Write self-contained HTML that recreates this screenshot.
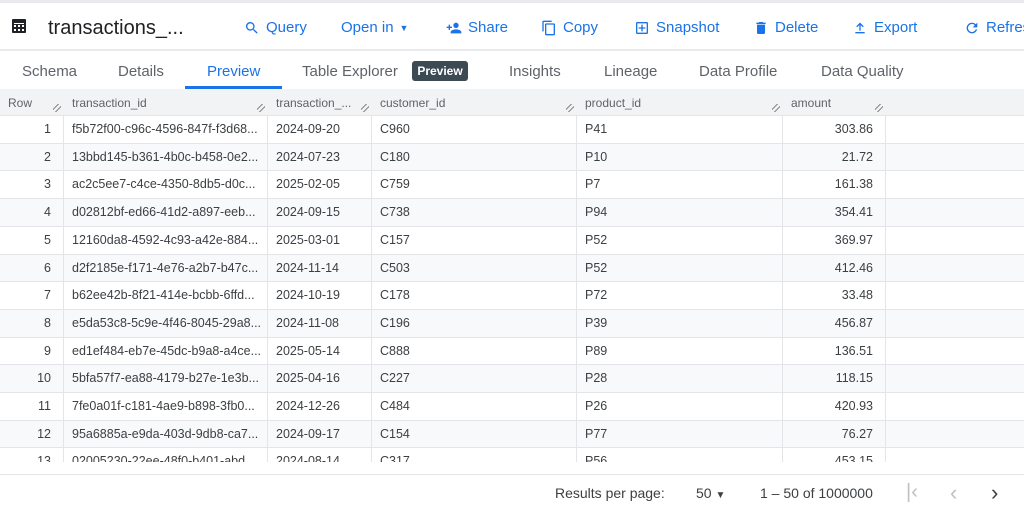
<!DOCTYPE html>
<html><head><meta charset="utf-8"><style>
*{box-sizing:border-box;margin:0;padding:0}
body{width:1024px;height:508px;overflow:hidden;background:#fff;font-family:"Liberation Sans",Arial,sans-serif;position:relative}
.top{position:absolute;left:0;top:0;width:1024px;height:3px;background:#e8eaed}
.tb{position:absolute;top:3px;left:0;width:1024px;height:48px;border-bottom:2px solid #e8eaed}
.title{position:absolute;left:48px;top:14px;font-size:20px;color:#202124}
.btn{position:absolute;top:16px;font-size:15px;color:#1a73e8;display:flex;align-items:center;gap:6px;white-space:nowrap}
.btn svg{width:16px;height:16px;fill:#1a73e8}
.tabs{position:absolute;top:54px;left:0;width:1024px;height:35px}
.tab{position:absolute;top:9px;font-size:15px;color:#5f6368}
.tab.a{color:#1a73e8}
.ul{position:absolute;left:185px;top:32px;width:97px;height:3px;background:#1a73e8}
.badge{position:absolute;left:412px;top:61px;width:56px;height:20px;background:#3c4a54;border-radius:3px;color:#fff;font-size:12px;text-align:center;line-height:20px;font-weight:bold}
.grid{position:absolute;top:89px;left:0;width:1024px;height:373px;overflow:hidden}
.row{position:absolute;left:0;width:1024px;height:28px;border-bottom:1px solid #e3e5e8;font-size:12.5px;color:#3c4043}
.row.h{background:#f1f3f4;color:#5f6368;font-size:12px;height:27px}
.row.g{background:#f8f9fa}
.c{position:absolute;top:0;height:100%;border-right:1px solid #e3e5e8;padding-left:8px;line-height:27px;white-space:nowrap;overflow:hidden}
.h .c{line-height:28px;border-right:none}
.r{text-align:right;padding-right:12px;padding-left:0}
.rz{position:absolute;bottom:3px;width:8px;height:8px;background:linear-gradient(135deg,transparent 30%,#888 30%,#888 40%,transparent 40%,transparent 60%,#888 60%,#888 70%,transparent 70%)}
.foot{position:absolute;top:474px;left:0;width:1024px;height:34px;border-top:1px solid #e3e5e8;font-size:14px;color:#3c4043}
</style></head><body>
<div class="top"></div>
<div class="tb">
<svg style="position:absolute;left:12px;top:16px" width="14" height="14" viewBox="0 0 14 14"><rect x="0" y="0" width="14" height="14" rx="1" fill="#202124"/><g fill="#fff"><rect x="2" y="4" width="10" height="1"/><rect x="2" y="6" width="2" height="2"/><rect x="6" y="6" width="2" height="2"/><rect x="10" y="6" width="2" height="2"/><rect x="2" y="10" width="2" height="2"/><rect x="6" y="10" width="2" height="2"/><rect x="10" y="10" width="2" height="2"/></g></svg>
<div class="title">transactions_...</div>
<div class="btn" style="left:244px"><svg viewBox="0 0 24 24"><path d="M15.5 14h-.8l-.3-.3A6.5 6.5 0 1 0 9.5 16a6.5 6.5 0 0 0 4.2-1.6l.3.3v.8l5 5 1.5-1.5-5-5zm-6 0A4.5 4.5 0 1 1 14 9.5 4.5 4.5 0 0 1 9.5 14z"/></svg>Query</div>
<div class="btn" style="left:341px">Open in <span style="font-size:9px">▼</span></div>
<div class="btn" style="left:446px"><svg viewBox="0 0 24 24"><path d="M15 12a4 4 0 1 0-4-4 4 4 0 0 0 4 4zm-9-2V7H4v3H1v2h3v3h2v-3h3v-2zm9 4c-2.7 0-8 1.3-8 4v2h16v-2c0-2.7-5.3-4-8-4z"/></svg>Share</div>
<div class="btn" style="left:541px"><svg viewBox="0 0 24 24"><path d="M16 1H4a2 2 0 0 0-2 2v14h2V3h12zm3 4H8a2 2 0 0 0-2 2v14a2 2 0 0 0 2 2h11a2 2 0 0 0 2-2V7a2 2 0 0 0-2-2zm0 16H8V7h11z"/></svg>Copy</div>
<div class="btn" style="left:634px"><svg viewBox="0 0 24 24"><path d="M19 3H5a2 2 0 0 0-2 2v14a2 2 0 0 0 2 2h14a2 2 0 0 0 2-2V5a2 2 0 0 0-2-2zm0 16H5V5h14zM11 7h2v4h4v2h-4v4h-2v-4H7v-2h4z"/></svg>Snapshot</div>
<div class="btn" style="left:753px"><svg viewBox="0 0 24 24"><path d="M6 19a2 2 0 0 0 2 2h8a2 2 0 0 0 2-2V7H6zM19 4h-3.5l-1-1h-5l-1 1H5v2h14z"/></svg>Delete</div>
<div class="btn" style="left:852px"><svg viewBox="0 0 24 24"><path d="M5 18h14v2H5zm6-13.2L6.4 9.4 7.8 10.8 11 7.6V16h2V7.6l3.2 3.2 1.4-1.4L12 3.8z"/></svg>Export</div>
<div class="btn" style="left:964px"><svg viewBox="0 0 24 24"><path d="M17.6 6.4A8 8 0 1 0 19.7 14h-2.1A6 6 0 1 1 12 6a5.9 5.9 0 0 1 4.2 1.8L13 11h7V4z"/></svg>Refresh</div>
</div>
<div class="tabs">
<div class="tab" style="left:22px">Schema</div>
<div class="tab" style="left:118px">Details</div>
<div class="tab a" style="left:207px">Preview</div>
<div class="tab" style="left:302px">Table Explorer</div>
<div class="tab" style="left:509px">Insights</div>
<div class="tab" style="left:604px">Lineage</div>
<div class="tab" style="left:699px">Data Profile</div>
<div class="tab" style="left:821px">Data Quality</div>
<div class="ul"></div>
</div>
<div class="badge">Preview</div>
<div class="grid" id="g"></div>
<div class="foot">
<span style="position:absolute;left:555px;top:10px">Results per page:</span>
<span style="position:absolute;left:696px;top:10px">50 <span style="font-size:10px">▼</span></span>
<span style="position:absolute;left:760px;top:10px">1 – 50 of 1000000</span>
<span style="position:absolute;left:906px;top:6px;font-size:20px;color:#bdc1c6">|‹</span>
<span style="position:absolute;left:950px;top:5px;font-size:22px;color:#bdc1c6">‹</span>
<span style="position:absolute;left:991px;top:5px;font-size:22px;color:#3c4043">›</span>
</div>
<script>
var cols=[[0,64],[64,268],[268,372],[372,577],[577,783],[783,886]];
var d=[["1","f5b72f00-c96c-4596-847f-f3d68...","2024-09-20","C960","P41","303.86"],
["2","13bbd145-b361-4b0c-b458-0e2...","2024-07-23","C180","P10","21.72"],
["3","ac2c5ee7-c4ce-4350-8db5-d0c...","2025-02-05","C759","P7","161.38"],
["4","d02812bf-ed66-41d2-a897-eeb...","2024-09-15","C738","P94","354.41"],
["5","12160da8-4592-4c93-a42e-884...","2025-03-01","C157","P52","369.97"],
["6","d2f2185e-f171-4e76-a2b7-b47c...","2024-11-14","C503","P52","412.46"],
["7","b62ee42b-8f21-414e-bcbb-6ffd...","2024-10-19","C178","P72","33.48"],
["8","e5da53c8-5c9e-4f46-8045-29a8...","2024-11-08","C196","P39","456.87"],
["9","ed1ef484-eb7e-45dc-b9a8-a4ce...","2025-05-14","C888","P89","136.51"],
["10","5bfa57f7-ea88-4179-b27e-1e3b...","2025-04-16","C227","P28","118.15"],
["11","7fe0a01f-c181-4ae9-b898-3fb0...","2024-12-26","C484","P26","420.93"],
["12","95a6885a-e9da-403d-9db8-ca7...","2024-09-17","C154","P77","76.27"],
["13","02005230-22ee-48f0-b401-abd...","2024-08-14","C317","P56","453.15"]];
var h=["Row","transaction_id","transaction_...","customer_id","product_id","amount"];
var s='<div class="row h" style="top:0">';
cols.forEach(function(c,i){s+='<div class="c" style="left:'+c[0]+'px;width:'+(c[1]-c[0])+'px">'+h[i]+'<div class="rz" style="left:'+(c[1]-c[0]-11)+'px"></div></div>';});
s+='</div>';
d.forEach(function(r,k){var t=Math.round(27+k*27.7);var ht=Math.round(27+(k+1)*27.7)-t;s+='<div class="row'+(k%2?' g':'')+'" style="top:'+t+'px;height:'+ht+'px">';
cols.forEach(function(c,i){s+='<div class="c'+(i==0||i==5?' r':'')+'" style="left:'+c[0]+'px;width:'+(c[1]-c[0])+'px">'+r[i]+'</div>';});s+='</div>';});
document.getElementById('g').innerHTML=s;
</script>
</body></html>
